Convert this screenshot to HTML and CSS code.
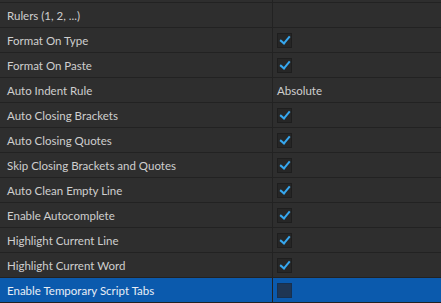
FILE: index.html
```html
<!DOCTYPE html>
<html lang="en">
<head>
    <meta charset="UTF-8">
    <title>Script Editor Settings</title>
    <link rel="stylesheet" href="styles.css">
</head>
<body>
    <div class="settings">
        <div class="row stub"><div class="name"></div><div class="value"></div></div>
        <div class="row"><div class="name">Rulers (1, 2, ...)</div><div class="value"></div></div>
        <div class="row"><div class="name">Format On Type</div><div class="value"><span class="check on"></span></div></div>
        <div class="row"><div class="name">Format On Paste</div><div class="value"><span class="check on"></span></div></div>
        <div class="row"><div class="name">Auto Indent Rule</div><div class="value">Absolute</div></div>
        <div class="row"><div class="name">Auto Closing Brackets</div><div class="value"><span class="check on"></span></div></div>
        <div class="row"><div class="name">Auto Closing Quotes</div><div class="value"><span class="check on"></span></div></div>
        <div class="row"><div class="name">Skip Closing Brackets and Quotes</div><div class="value"><span class="check on"></span></div></div>
        <div class="row"><div class="name">Auto Clean Empty Line</div><div class="value"><span class="check on"></span></div></div>
        <div class="row"><div class="name">Enable Autocomplete</div><div class="value"><span class="check on"></span></div></div>
        <div class="row"><div class="name">Highlight Current Line</div><div class="value"><span class="check on"></span></div></div>
        <div class="row"><div class="name">Highlight Current Word</div><div class="value"><span class="check on"></span></div></div>
        <div class="row selected"><div class="name">Enable Temporary Script Tabs</div><div class="value"><span class="check"></span></div></div>
    </div>
</body>
</html>
```

FILE: styles.css
```css
body {
    margin: 0;
    background-color: #2e2e2e;
    font-family: Lato, sans-serif;
    font-size: 11.5px;
    color: #cfcfcf;
}

.settings {
    display: flex;
    flex-direction: column;
}

.row {
    display: grid;
    grid-template-columns: 273px 1fr;
    height: 24px;
    border-bottom: 1px solid #222222;
}

.row.stub {
    height: 2px;
}

.name,
.value {
    display: flex;
    align-items: center;
}

.name {
    padding-left: 7px;
    border-right: 1px solid #222222;
}

.value {
    padding-left: 4px;
}

.selected {
    background-color: #0b5aad;
    color: #e8eef6;
}

/* Checkbox */
.check {
    position: relative;
    width: 13px;
    height: 13px;
    border: 1px solid #1e1e1e;
    background-color: #262626;
}

.check.on::after {
    content: "";
    position: absolute;
    left: 4px;
    top: 0px;
    width: 4px;
    height: 8px;
    border-right: 2px solid #37a8f0;
    border-bottom: 2px solid #37a8f0;
    transform: rotate(40deg);
}

.selected .check {
    background-color: #1f3654;
    border-color: #163050;
}
```
